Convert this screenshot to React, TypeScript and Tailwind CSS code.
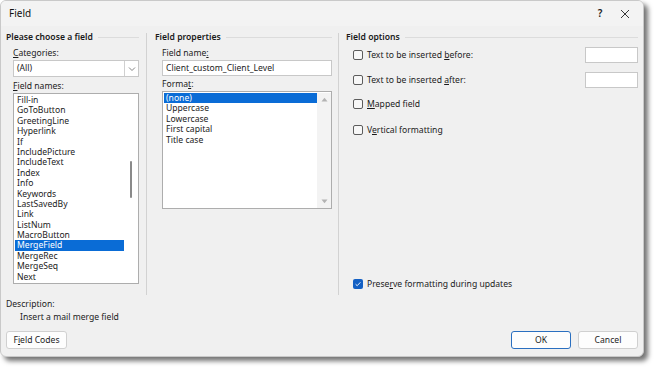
const font = { fontFamily: '"Noto Sans", "Open Sans", sans-serif' };

const fieldNames = [
  "Fill-in",
  "GoToButton",
  "GreetingLine",
  "Hyperlink",
  "If",
  "IncludePicture",
  "IncludeText",
  "Index",
  "Info",
  "Keywords",
  "LastSavedBy",
  "Link",
  "ListNum",
  "MacroButton",
  "MergeField",
  "MergeRec",
  "MergeSeq",
  "Next",
];

const formats = ["(none)", "Uppercase", "Lowercase", "First capital", "Title case"];

function GroupTitle({ children }: { children: React.ReactNode }) {
  return (
    <div className="flex items-center gap-[5px] h-[12px]">
      <span className="font-semibold text-[#1a1a1a] whitespace-nowrap">{children}</span>
      <div className="flex-1 h-px bg-[#dcdcdc]" />
    </div>
  );
}

function CheckBox({ checked = false }: { checked?: boolean }) {
  if (checked) {
    return (
      <div className="w-[10px] h-[10px] rounded-[2px] bg-[#1360c4] flex items-center justify-center">
        <svg width="8" height="8" viewBox="0 0 8 8">
          <path d="M1.6 4.2 L3.2 5.7 L6.4 2.3" fill="none" stroke="white" strokeWidth="0.9" />
        </svg>
      </div>
    );
  }
  return <div className="w-[10px] h-[10px] rounded-[2px] border border-[#5c5c5c] bg-[#f7f7f7]" />;
}

function OptionRow({ checked, children }: { checked?: boolean; children: React.ReactNode }) {
  return (
    <div className="flex items-center gap-[4px] h-[12px]">
      <CheckBox checked={checked} />
      <span>{children}</span>
    </div>
  );
}

export default function App() {
  return (
    <div className="w-[658px] h-[372px] bg-white text-[8.6px] text-[#1b1b1b]" style={font}>
      <div className="w-[644px] h-[357px] bg-[#f0f0f0] rounded-[6px] border border-[#c9c9c9] shadow-[4px_4px_5px_rgba(0,0,0,0.55)] flex flex-col overflow-hidden">
        {/* title bar */}
        <div className="h-[25px] bg-[#f3f3f3] flex items-center pl-[8px] shrink-0">
          <span className="text-[10px] text-[#111]">Field</span>
          <span className="ml-auto w-[36px] text-center text-[10px] font-semibold">?</span>
          <svg width="10" height="10" viewBox="0 0 10 10" className="ml-[2px] mr-[13px]">
            <path d="M1 1 L9 9 M9 1 L1 9" stroke="#222" strokeWidth="0.9" />
          </svg>
        </div>

        <div className="flex h-[270px] pt-[5px]">
          {/* left group */}
          <div className="w-[145px] pl-[5px] pr-[7px] flex flex-col">
            <GroupTitle>Please choose a field</GroupTitle>
            <div className="pl-[7px] flex flex-col">
              <div className="mt-[4px] h-[12px] leading-[12px]">
                <span className="underline">C</span>ategories:
              </div>
              <div className="mt-[1px] h-[17px] bg-white border border-[#c8c8c8] flex">
                <span className="flex-1 pl-[3px] leading-[15px]">(All)</span>
                <div className="w-[14px] border-l border-[#d0d0d0] flex items-center justify-center">
                  <svg width="8" height="6" viewBox="0 0 8 6">
                    <path d="M1 1.5 L4 4.5 L7 1.5" fill="none" stroke="#777" strokeWidth="0.9" />
                  </svg>
                </div>
              </div>
              <div className="mt-[2px] h-[14px] leading-[14px]">
                <span className="underline">F</span>ield names:
              </div>
              <div className="h-[191px] bg-white border border-[#adadad] flex pt-[1px] pl-px">
                <div className="flex-1 flex flex-col">
                  {fieldNames.map((n) => (
                    <div
                      key={n}
                      className={
                        "h-[10.4px] leading-[10.4px] pl-[2px] " +
                        (n === "MergeField" ? "bg-[#0a6cd6] text-white" : "")
                      }
                    >
                      {n}
                    </div>
                  ))}
                </div>
                <div className="w-[14px] flex justify-center pt-[66px]">
                  <div className="w-[2px] h-[37px] bg-[#8a8a8a] rounded-full" />
                </div>
              </div>
            </div>
          </div>
          <div className="w-px h-[262px] mt-[2px] bg-[#d2d2d2]" />

          {/* middle group */}
          <div className="w-[191px] pl-[8px] pr-[6px] flex flex-col">
            <GroupTitle>Field properties</GroupTitle>
            <div className="pl-[7px] flex flex-col">
              <div className="mt-[4px] h-[12px] leading-[12px]">
                Field name<span className="underline">:</span>
              </div>
              <div className="mt-[1px] h-[16px] bg-white border border-[#c8c8c8] pl-[3px] leading-[14px]">
                Client_custom_Client_Level
              </div>
              <div className="mt-[1px] h-[14px] leading-[14px]">
                Forma<span className="underline">t</span>:
              </div>
              <div className="h-[118px] bg-white border border-[#adadad] flex pt-[1px] pl-px">
                <div className="flex-1 flex flex-col">
                  {formats.map((f, i) => (
                    <div
                      key={f}
                      className={
                        "h-[10.4px] leading-[10.4px] pl-[2px] " +
                        (i === 0 ? "bg-[#0a6cd6] text-white" : "")
                      }
                    >
                      {f}
                    </div>
                  ))}
                </div>
                <div className="w-[14px] bg-[#f3f3f3] flex flex-col items-center justify-between py-[4px]">
                  <svg width="7" height="5" viewBox="0 0 7 5">
                    <path d="M0.5 4.5 L3.5 0.8 L6.5 4.5 Z" fill="#b3b3b3" />
                  </svg>
                  <svg width="7" height="5" viewBox="0 0 7 5">
                    <path d="M0.5 0.5 L3.5 4.2 L6.5 0.5 Z" fill="#b3b3b3" />
                  </svg>
                </div>
              </div>
            </div>
          </div>
          <div className="w-px h-[262px] mt-[2px] bg-[#d2d2d2]" />

          {/* right group */}
          <div className="flex-1 pl-[7px] pr-[5px] flex flex-col">
            <GroupTitle>Field options</GroupTitle>
            <div className="pl-[7px] flex flex-col">
              <div className="flex items-center h-[16px] mt-[4px]">
                <OptionRow>
                  Text to be inserted <span className="underline">b</span>efore:
                </OptionRow>
                <div className="ml-auto w-[53px] h-[16px] bg-white border border-[#c8c8c8]" />
              </div>
              <div className="flex items-center h-[16px] mt-[9px]">
                <OptionRow>
                  Text to be inserted <span className="underline">a</span>fter:
                </OptionRow>
                <div className="ml-auto w-[53px] h-[16px] bg-white border border-[#c8c8c8]" />
              </div>
              <div className="mt-[10px]">
                <OptionRow>
                  <span className="underline">M</span>apped field
                </OptionRow>
              </div>
              <div className="mt-[14px]">
                <OptionRow>
                  V<span className="underline">e</span>rtical formatting
                </OptionRow>
              </div>
              <div className="mt-[142px]">
                <OptionRow checked>
                  Prese<span className="underline">r</span>ve formatting during updates
                </OptionRow>
              </div>
            </div>
          </div>
        </div>

        {/* description */}
        <div className="pl-[5px] mt-[2px]">
          <div className="h-[12px] leading-[12px]">Description:</div>
          <div className="h-[12px] leading-[12px] pl-[14px] mt-[1px]">Insert a mail merge field</div>
        </div>

        {/* buttons */}
        <div className="flex items-center px-[5px] mt-[8px]">
          <div className="w-[61px] h-[18px] bg-[#fdfdfd] border border-[#d0d0d0] rounded-[3px] flex items-center justify-center">
            F<span className="underline">i</span>eld Codes
          </div>
          <div className="ml-auto w-[60px] h-[18px] bg-[#fdfdfd] border border-[#2a6fc0] rounded-[3px] flex items-center justify-center">
            OK
          </div>
          <div className="ml-[7px] w-[60px] h-[18px] bg-[#fdfdfd] border border-[#d0d0d0] rounded-[3px] flex items-center justify-center">
            Cancel
          </div>
        </div>
      </div>
    </div>
  );
}
